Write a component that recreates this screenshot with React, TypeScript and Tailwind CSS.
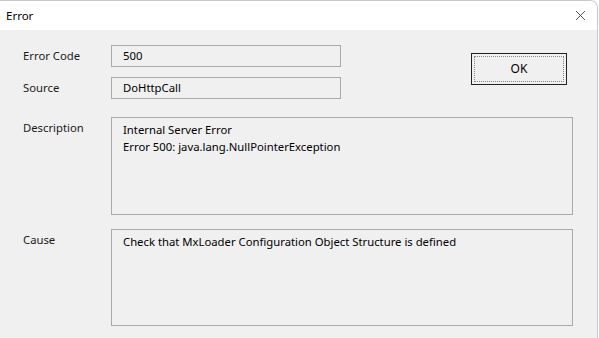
import { X } from 'lucide-react';

const font = { fontFamily: '"Noto Sans", "Segoe UI", sans-serif' };

function Field({ label, value }: { label: string; value: string }) {
    return (
        <div className="flex items-center h-[22px]">
            <div className="w-[88px] text-[11.3px] text-[#1a1a1a]">{label}</div>
            <div className="w-[230px] h-[22px] border border-[#a9a9a9] bg-[#f0f0f0] pl-[11px] text-[11.3px] leading-[20px] text-black">
                {value}
            </div>
        </div>
    );
}

export default function App() {
    return (
        <div className="w-[599px] h-[338px] bg-white" style={font}>
            <div className="w-[598px] h-[338px] flex flex-col border-t border-r border-[#c8c8c8] rounded-tr-[8px] overflow-hidden">
                {/* Barra de título */}
                <div className="h-[29px] bg-white flex items-center justify-between pl-[6px] pr-[8px]">
                    <span className="text-[11.5px] text-black">Error</span>
                    <X className="w-[17px] h-[17px] text-[#222]" strokeWidth={1.1} />
                </div>

                {/* Cuerpo del diálogo */}
                <div className="flex-1 bg-[#f0f0f0] pl-[23px] pt-[15px]">
                    <div className="flex">
                        <div className="flex flex-col gap-[10px]">
                            <Field label="Error Code" value="500" />
                            <Field label="Source" value="DoHttpCall" />
                        </div>
                        <button className="ml-[130px] mt-[8px] w-[96px] h-[32px] border border-[#222] bg-[#f0f0f0] p-[2px]">
                            <div className="w-full h-full border border-dotted border-[#888] flex items-center justify-center text-[12px] text-black">
                                OK
                            </div>
                        </button>
                    </div>

                    <div className="flex mt-[18px]">
                        <div className="w-[88px] text-[11.3px] text-[#1a1a1a] pt-[3px]">Description</div>
                        <div className="w-[462px] h-[98px] border border-[#a9a9a9] pl-[11px] pt-[3px] text-[11.3px] leading-[17px] text-black">
                            <div>Internal Server Error</div>
                            <div>Error 500: java.lang.NullPointerException</div>
                        </div>
                    </div>

                    <div className="flex mt-[14px]">
                        <div className="w-[88px] text-[11.3px] text-[#1a1a1a] pt-[3px]">Cause</div>
                        <div className="w-[462px] h-[97px] border border-[#a9a9a9] pl-[11px] pt-[3px] text-[11.3px] leading-[17px] text-black">
                            Check that MxLoader Configuration Object Structure is defined
                        </div>
                    </div>
                </div>
            </div>
        </div>
    );
}
